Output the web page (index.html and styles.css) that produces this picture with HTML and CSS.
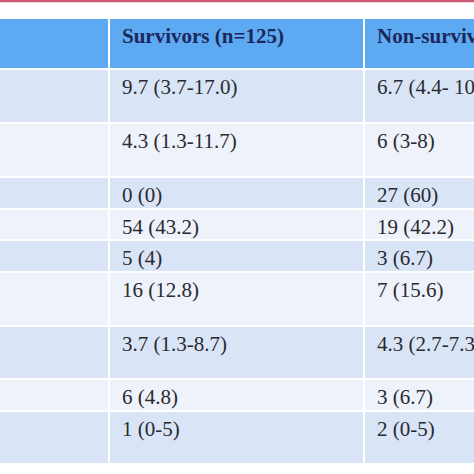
FILE: index.html
```html
<!DOCTYPE html>
<html>
<head>
<meta charset="utf-8">
<link rel="stylesheet" href="styles.css">
</head>
<body>
<div class="topline"></div>
<div class="table">
  <div class="cell head"></div>
  <div class="cell head">Survivors (n=125)</div>
  <div class="cell head">Non-survivors (n=45)</div>

  <div class="cell blue"></div>
  <div class="cell blue">9.7 (3.7-17.0)</div>
  <div class="cell blue">6.7 (4.4- 10.0)</div>

  <div class="cell pale"></div>
  <div class="cell pale">4.3 (1.3-11.7)</div>
  <div class="cell pale">6 (3-8)</div>

  <div class="cell blue"></div>
  <div class="cell blue">0 (0)</div>
  <div class="cell blue">27 (60)</div>

  <div class="cell pale"></div>
  <div class="cell pale">54 (43.2)</div>
  <div class="cell pale">19 (42.2)</div>

  <div class="cell blue"></div>
  <div class="cell blue">5 (4)</div>
  <div class="cell blue">3 (6.7)</div>

  <div class="cell pale"></div>
  <div class="cell pale">16 (12.8)</div>
  <div class="cell pale">7 (15.6)</div>

  <div class="cell blue"></div>
  <div class="cell blue">3.7 (1.3-8.7)</div>
  <div class="cell blue">4.3 (2.7-7.3)</div>

  <div class="cell pale"></div>
  <div class="cell pale">6 (4.8)</div>
  <div class="cell pale">3 (6.7)</div>

  <div class="cell blue"></div>
  <div class="cell blue">1 (0-5)</div>
  <div class="cell blue">2 (0-5)</div>
</div>
</body>
</html>
```

FILE: styles.css
```css
html, body {
  margin: 0;
  padding: 0;
  background: #ffffff;
  overflow: hidden;
  width: 474px;
  height: 474px;
}

.topline {
  height: 2px;
  background: #c85a73;
  border-bottom: 1px solid #f3d9df;
}

.table {
  margin-top: 16px;
  display: grid;
  grid-template-columns: 108px 253px 220px;
  grid-template-rows: 49px 52px 52px 30px 29px 30px 52px 51px 30px 51px;
  column-gap: 2px;
  row-gap: 2px;
  width: 585px;
  font-family: "Liberation Serif", "Times New Roman", serif;
  font-size: 21px;
  line-height: 22px;
  color: #2a2a30;
}

.cell {
  padding: 6px 0 0 12px;
  white-space: nowrap;
  overflow: hidden;
}

.head {
  background: #5eaaf2;
  color: #1a285c;
  font-weight: bold;
}

.blue {
  background: #d9e5f7;
}

.pale {
  background: #eef2fa;
}
```
